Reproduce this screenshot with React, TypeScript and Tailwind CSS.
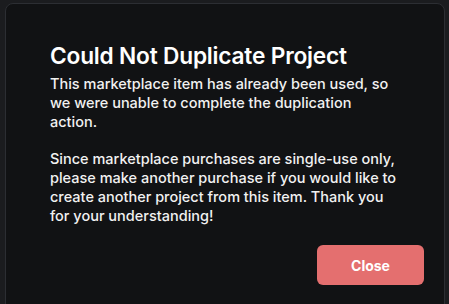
const LINES_A = [
  'This marketplace item has already been used, so',
  'we were unable to complete the duplication',
  'action.',
]

const LINES_B = [
  'Since marketplace purchases are single-use only,',
  'please make another purchase if you would like to',
  'create another project from this item. Thank you',
  'for your understanding!',
]

export default function App() {
  return (
    <div className="w-[449px] h-[304px] overflow-hidden bg-[#1b1c1f] pt-[3px] pl-[5px] pr-[4px] font-['Inter',sans-serif]">
      <div className="h-[320px] rounded-lg border border-[#2c2e33] bg-[#111214] px-[44px] pt-[37px]">
        <h2 className="text-[22.7px] font-semibold leading-[29px] text-white tracking-[-0.2px]">
          Could Not Duplicate Project
        </h2>
        <div className="mt-[5px] text-[14.5px] font-medium leading-[18.8px] text-[#f1f1f1] whitespace-nowrap">
          <p>
            {LINES_A.map(l => (
              <span key={l} className="block">{l}</span>
            ))}
          </p>
          <p className="mt-[18.8px]">
            {LINES_B.map(l => (
              <span key={l} className="block">{l}</span>
            ))}
          </p>
        </div>
        <div className="mt-[20px] flex justify-end -mr-[24px]">
          <button className="h-[40px] w-[107px] rounded-md bg-[#e46f6f] text-[14px] font-bold text-white">
            Close
          </button>
        </div>
      </div>
    </div>
  )
}
